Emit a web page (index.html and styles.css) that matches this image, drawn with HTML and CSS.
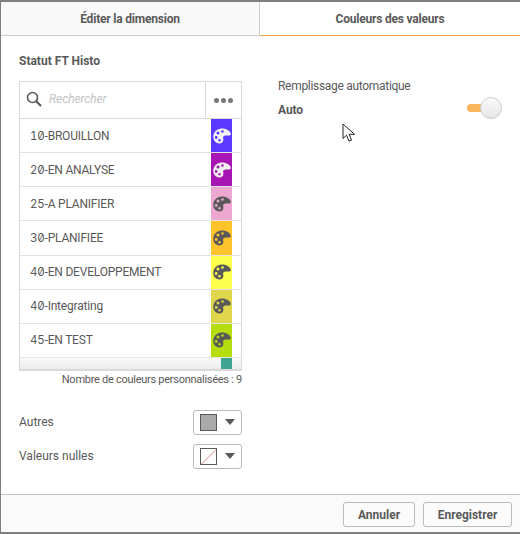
FILE: index.html
```html
<!DOCTYPE html>
<html lang="fr">
<head>
<meta charset="utf-8">
<title>Couleurs des valeurs</title>
<link rel="stylesheet" href="styles.css">
</head>
<body>
<svg class="defs" width="0" height="0">
  <symbol id="palette" viewBox="0 0 18 16">
    <path fill-rule="evenodd" d="M8.500.500C13 .200 17.800 3 17.800 6 17.800 7.800 15.500 7.600 13.500 7.400 11 7.200 9.600 8.400 10.200 10.400 10.800 12.400 10 15.200 6.500 15.400 3 15.600.300 12.800.300 8.800.300 4 4 .800 8.500.500ZM9.500 2.200a1.300 1.300 0 1 0 0 2.600 1.300 1.300 0 0 0 0-2.600ZM5 3.500a1.500 1.500 0 1 0 0 3 1.500 1.500 0 0 0 0-3ZM3.200 8.100a1.400 1.400 0 1 0 0 2.800 1.400 1.400 0 0 0 0-2.800ZM6.500 11a1.300 1.300 0 1 0 0 2.600 1.300 1.300 0 0 0 0-2.600Z"/>
  </symbol>
</svg>
<div class="dialog">
  <nav class="tabs">
    <div class="tab tab-idle">Éditer la dimension</div>
    <div class="tab tab-active">Couleurs des valeurs</div>
  </nav>
  <main class="content">
    <section class="left">
      <h2 class="dim-title">Statut FT Histo</h2>
      <div class="listbox">
        <div class="search">
          <svg class="search-icon" viewBox="0 0 16 16" width="16" height="16"><circle cx="6.500" cy="6.500" r="5" fill="none" stroke="#595959" stroke-width="1.600"/><path d="M10.200 10.200 15 15" stroke="#595959" stroke-width="2.200"/></svg>
          <span class="placeholder">Rechercher</span>
          <div class="more"><i></i><i></i><i></i></div>
        </div>
        <div class="row"><span><b class="num">10</b>-BROUILLON</span><div class="swatch light c1"><svg><use href="#palette"/></svg></div></div>
        <div class="row"><span><b class="num">20</b>-EN ANALYSE</span><div class="swatch light c2"><svg><use href="#palette"/></svg></div></div>
        <div class="row"><span><b class="num">25</b>-A PLANIFIER</span><div class="swatch c3"><svg><use href="#palette"/></svg></div></div>
        <div class="row"><span><b class="num">30</b>-PLANIFIEE</span><div class="swatch c4"><svg><use href="#palette"/></svg></div></div>
        <div class="row"><span><b class="num">40</b>-EN DEVELOPPEMENT</span><div class="swatch c5"><svg><use href="#palette"/></svg></div></div>
        <div class="row"><span><b class="num">40</b>-Integrating</span><div class="swatch c6"><svg><use href="#palette"/></svg></div></div>
        <div class="row"><span><b class="num">45</b>-EN TEST</span><div class="swatch c7"><svg><use href="#palette"/></svg></div></div>
        <div class="scrollbar"><div class="thumb"></div></div>
      </div>
      <p class="count">Nombre de couleurs personnalisées : 9</p>
      <div class="picker-row picker-first">
        <span>Autres</span>
        <div class="picker"><div class="chip chip-grey"></div><div class="caret"></div></div>
      </div>
      <div class="picker-row">
        <span>Valeurs nulles</span>
        <div class="picker">
          <div class="chip"><svg viewBox="0 0 16 16" width="16" height="16"><path d="M0 16 16 0" stroke="#d98080" stroke-width="1"/></svg></div>
          <div class="caret"></div>
        </div>
      </div>
    </section>
    <section class="right">
      <div class="auto-label">Remplissage automatique</div>
      <div class="auto-row">
        <strong>Auto</strong>
        <div class="switch"><div class="track"></div><div class="knob"></div></div>
      </div>
    </section>
  </main>
  <footer class="footer">
    <button class="btn btn-cancel">Annuler</button>
    <button class="btn btn-save">Enregistrer</button>
  </footer>
  <svg class="cursor" viewBox="0 0 14 20" width="14" height="20"><path d="M1 1v14.500l3.500-3.300 2.500 6 2.600-1.100-2.500-5.800H12.500Z" fill="#fff" stroke="#222" stroke-width="1"/></svg>
</div>
</body>
</html>
```
FILE: styles.css
```css
* { box-sizing: border-box; }
html, body { margin: 0; padding: 0; }
body {
  width: 520px;
  height: 534px;
  background: #fff;
  font-family: Roboto, "Liberation Sans", sans-serif;
  font-size: 12px;
  color: #595959;
  overflow: hidden;
}
.defs { position: absolute; }
.dialog {
  position: relative;
  width: 520px;
  height: 534px;
  display: flex;
  flex-direction: column;
  border-top: 2px solid #7f7f7f;
  border-left: 1px solid #7f7f7f;
  border-bottom: 2px solid #7f7f7f;
}
.tabs { display: flex; height: 34px; flex: none; }
.tab {
  display: flex;
  align-items: center;
  justify-content: center;
  font-weight: 700;
  font-size: 12px;
  color: #595959;
  letter-spacing: -0.2px;
}
.tab-idle {
  width: 259px;
  background: #f9f9f9;
  border-bottom: 1px solid #ccc;
  border-right: 1px solid #ccc;
}
.tab-active { flex: 1; border-bottom: 1px solid #f0a33c; }
.content { flex: 1; display: flex; min-height: 0; }
.left { width: 241px; margin-left: 18px; flex: none; display: flex; flex-direction: column; }
.dim-title { margin: 18px 0 13px; font-size: 12px; line-height: 14px; font-weight: 700; color: #595959; }
.listbox { border: 1px solid #d9d9d9; border-bottom-width: 2px; width: 223px; }
.search { display: flex; align-items: center; height: 37px; border-bottom: 1px solid #d9d9d9; padding-left: 6px; position: relative; }
.search-icon { flex: none; margin-top: -2px; }
.placeholder { margin-left: 7px; margin-top: -2px; font-style: italic; color: #c4c4c4; font-size: 12px; letter-spacing: -0.1px; flex: 1; }
.more {
  width: 36px;
  height: 35px;
  align-self: flex-start;
  border-left: 1px solid #d9d9d9;
  display: flex;
  justify-content: center;
  align-items: center;
  gap: 2px;
  padding-top: 2px;
}
.more i { width: 5px; height: 5px; border-radius: 50%; background: #777; }
.row {
  height: 34.150px;
  display: flex;
  align-items: center;
  justify-content: space-between;
  border-bottom: 1px solid #e3e3e3;
  padding-left: 10px;
  padding-right: 9px;
  color: #595959;
  font-size: 12px;
  letter-spacing: -0.2px;
}
.num {
  font-family: Inter, Roboto, sans-serif;
  font-weight: 400;
  font-size: 11.500px;
  font-feature-settings: "zero", "tnum";
  letter-spacing: -0.2px;
}
.swatch { width: 21px; height: 100%; display: flex; align-items: center; justify-content: center; }
.swatch svg { width: 18px; height: 16px; fill: #595959; }
.swatch.light svg { fill: #f2f2f2; }
.c1 { background: #5b38ff; }
.c2 { background: #a716b5; }
.c3 { background: #eda8d2; }
.c4 { background: #ffc42b; }
.c5 { background: #ffff4d; }
.c6 { background: #dfd64c; }
.c7 { background: #b5dd10; }
.scrollbar {
  height: 11px;
  background: linear-gradient(#fafafa, #ececec);
  display: flex;
  justify-content: flex-end;
  padding-right: 9px;
}
.thumb { width: 11px; height: 100%; background: #3fa391; }
.count { margin: 2px 0 0; text-align: right; width: 223px; font-size: 11px; letter-spacing: -0.27px; line-height: 14px; color: #595959; }
.picker-row { display: flex; align-items: center; justify-content: space-between; width: 223px; height: 25px; margin-top: 9px; }
.picker-first { margin-top: 23px; }
.picker {
  width: 49px;
  height: 25px;
  border: 1px solid #bbb;
  border-radius: 3px;
  display: flex;
  align-items: center;
  padding-left: 6px;
  gap: 8px;
}
.chip { width: 17px; height: 17px; border: 1px solid #595959; background: #fff; display: flex; }
.chip-grey { background: #aaa; }
.caret { width: 0; height: 0; border-left: 5px solid transparent; border-right: 5px solid transparent; border-top: 6px solid #595959; }
.right { flex: 1; padding-left: 18px; padding-right: 18px; }
.auto-label { margin-top: 42px; line-height: 16px; letter-spacing: -0.3px; }
.auto-row { display: flex; justify-content: space-between; align-items: center; margin-top: 3px; height: 22px; }
.auto-row strong { font-weight: 700; margin-top: 4px; letter-spacing: -0.1px; }
.switch { position: relative; width: 35px; height: 22px; }
.track { position: absolute; left: 0; top: 7px; width: 22px; height: 8px; border-radius: 4px; background: #fbb55c; }
.knob {
  position: absolute;
  right: 0;
  top: 0;
  width: 22px;
  height: 22px;
  border-radius: 50%;
  border: 1px solid #ccc;
  background: linear-gradient(#fafafa, #e6e6e6);
}
.footer {
  height: 38px;
  flex: none;
  border-top: 1px solid #c4c4c4;
  background: #fafafa;
  display: flex;
  justify-content: flex-end;
  gap: 8px;
  padding: 7px 8px 0 0;
}
.btn {
  height: 25px;
  border: 1px solid #bbb;
  border-radius: 3px;
  background: #fbfbfb;
  font: 700 12px Roboto, "Liberation Sans", sans-serif;
  color: #595959;
  padding: 0;
}
.btn-cancel { width: 72px; }
.btn-save { width: 89px; }
.cursor { position: absolute; left: 341px; top: 121px; }
```
